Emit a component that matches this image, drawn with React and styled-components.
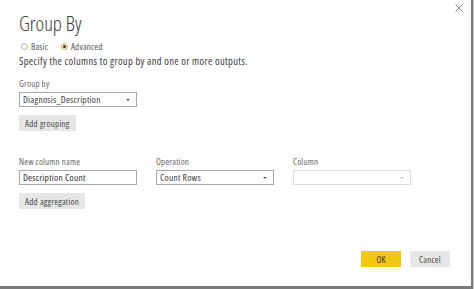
import React, { useState } from "react";
import styled, { createGlobalStyle } from "styled-components";

const GlobalStyle = createGlobalStyle`
  html, body {
    margin: 0;
    padding: 0;
    background: #c8c8c8;
  }
  body {
    font-family: "Open Sans", Lato, sans-serif;
    font-stretch: 87.5%;
    color: #333333;
  }
`;

function App() {
  const [mode, setMode] = useState("advanced");

  return (
    <>
      <GlobalStyle />
      <Dialog>
        <Header>
          <Title>Group By</Title>
          <CloseBtn aria-label="Close">
            <svg width="8" height="8" viewBox="0 0 8 8">
              <path d="M0.5 0.5 L7.5 7.5 M7.5 0.5 L0.5 7.5" stroke="#8a8a8a" strokeWidth="1" />
            </svg>
          </CloseBtn>
        </Header>
        <RadioRow>
          <RadioLabel onClick={() => setMode("basic")}>
            <RadioDot $checked={mode === "basic"} />
            Basic
          </RadioLabel>
          <RadioLabel onClick={() => setMode("advanced")}>
            <RadioDot $checked={mode === "advanced"} />
            Advanced
          </RadioLabel>
        </RadioRow>
        <Hint>Specify the columns to group by and one or more outputs.</Hint>

        <Section>
          <FieldLabel>Group by</FieldLabel>
          <Select>
            <span>Diagnosis_Description</span>
            <Caret />
          </Select>
          <GrayBtn>Add grouping</GrayBtn>
        </Section>

        <AggSection>
          <AggGrid>
            <FieldLabel>New column name</FieldLabel>
            <FieldLabel>Operation</FieldLabel>
            <FieldLabel>Column</FieldLabel>
            <TextBox>Description Count</TextBox>
            <Select>
              <span>Count Rows</span>
              <Caret />
            </Select>
            <Select $disabled>
              <span />
              <Caret $disabled />
            </Select>
          </AggGrid>
          <GrayBtn>Add aggregation</GrayBtn>
        </AggSection>

        <Footer>
          <OkBtn>OK</OkBtn>
          <GrayBtn $wide>Cancel</GrayBtn>
        </Footer>
      </Dialog>
    </>
  );
}

export default App;

const Dialog = styled.div`
  width: 473px;
  height: 289px;
  box-sizing: border-box;
  background: #ffffff;
  border-right: 2px solid #7a7a7a;
  border-bottom: 3px solid #7a7a7a;
  padding: 0 0 0 19px;
  display: flex;
  flex-direction: column;
`;

const Header = styled.div`
  display: flex;
  justify-content: space-between;
  align-items: flex-start;
  padding-right: 8px;
`;

const Title = styled.h1`
  margin: 10px 0 0 0;
  font-size: 20.5px;
  font-weight: 300;
  font-stretch: 75%;
  color: #3a3a3a;
  line-height: 26px;
`;

const CloseBtn = styled.div`
  margin-top: 4px;
  width: 8px;
  height: 8px;
  display: flex;
`;

const RadioRow = styled.div`
  display: flex;
  gap: 13px;
  margin-top: 5px;
  padding-left: 2px;
`;

const RadioLabel = styled.label`
  display: flex;
  align-items: center;
  gap: 3px;
  font-size: 9px;
  letter-spacing: 0.2px;
  color: #555555;
  cursor: pointer;
  line-height: 11px;
`;

const RadioDot = styled.span`
  width: 5px;
  height: 5px;
  border-radius: 50%;
  border: 1px solid ${(p) => (p.$checked ? "#c8b45a" : "#b0b0b0")};
  background: ${(p) => (p.$checked ? "#fbf1c4" : "#ffffff")};
  display: flex;
  align-items: center;
  justify-content: center;
  &::after {
    content: "";
    width: 3px;
    height: 3px;
    border-radius: 50%;
    background: ${(p) => (p.$checked ? "#333333" : "transparent")};
  }
`;

const Hint = styled.div`
  margin-top: 3px;
  font-size: 10.5px;
  letter-spacing: 0.35px;
  color: #3c3c3c;
  line-height: 13px;
`;

const Section = styled.div`
  margin-top: 10px;
  display: flex;
  flex-direction: column;
  align-items: flex-start;
`;

const FieldLabel = styled.div`
  font-size: 9px;
  letter-spacing: 0.2px;
  color: #666666;
  line-height: 11px;
  margin-bottom: 3px;
`;

const Select = styled.div`
  width: 118px;
  height: 15px;
  box-sizing: border-box;
  border: 1px solid ${(p) => (p.$disabled ? "#dcdcdc" : "#a8a8a8")};
  display: flex;
  align-items: center;
  justify-content: space-between;
  padding: 0 6px 0 3px;
  font-size: 9.5px;
  letter-spacing: 0.25px;
  color: #3a3a3a;
  background: #ffffff;
`;

const Caret = styled.span`
  width: 0;
  height: 0;
  border-left: 2px solid transparent;
  border-right: 2px solid transparent;
  border-top: 2px solid ${(p) => (p.$disabled ? "#c8c8c8" : "#555555")};
`;

const TextBox = styled.div`
  width: 118px;
  height: 15px;
  box-sizing: border-box;
  border: 1px solid #a8a8a8;
  display: flex;
  align-items: center;
  padding: 0 3px;
  font-size: 9.5px;
  letter-spacing: 0.25px;
  color: #2a2a2a;
`;

const GrayBtn = styled.button`
  margin-top: 8px;
  height: 16px;
  min-width: ${(p) => (p.$wide ? "40px" : "auto")};
  padding: 0 6px;
  border: none;
  background: #e6e6e6;
  font-family: inherit;
  font-stretch: inherit;
  font-size: 9px;
  letter-spacing: 0.25px;
  color: #4a4a4a;
  cursor: pointer;
`;

const AggSection = styled.div`
  margin-top: 25px;
  display: flex;
  flex-direction: column;
  align-items: flex-start;
`;

const AggGrid = styled.div`
  display: grid;
  grid-template-columns: 118px 118px 118px;
  column-gap: 19px;
  align-items: end;
`;

const Footer = styled.div`
  margin-top: auto;
  margin-bottom: 19px;
  display: flex;
  justify-content: flex-end;
  align-items: center;
  gap: 9px;
  padding-right: 21px;
  & > button {
    margin-top: 0;
  }
`;

const OkBtn = styled.button`
  width: 40px;
  height: 16px;
  border: none;
  background: #f2c811;
  font-family: inherit;
  font-stretch: inherit;
  font-size: 9px;
  color: #333333;
  cursor: pointer;
`;
